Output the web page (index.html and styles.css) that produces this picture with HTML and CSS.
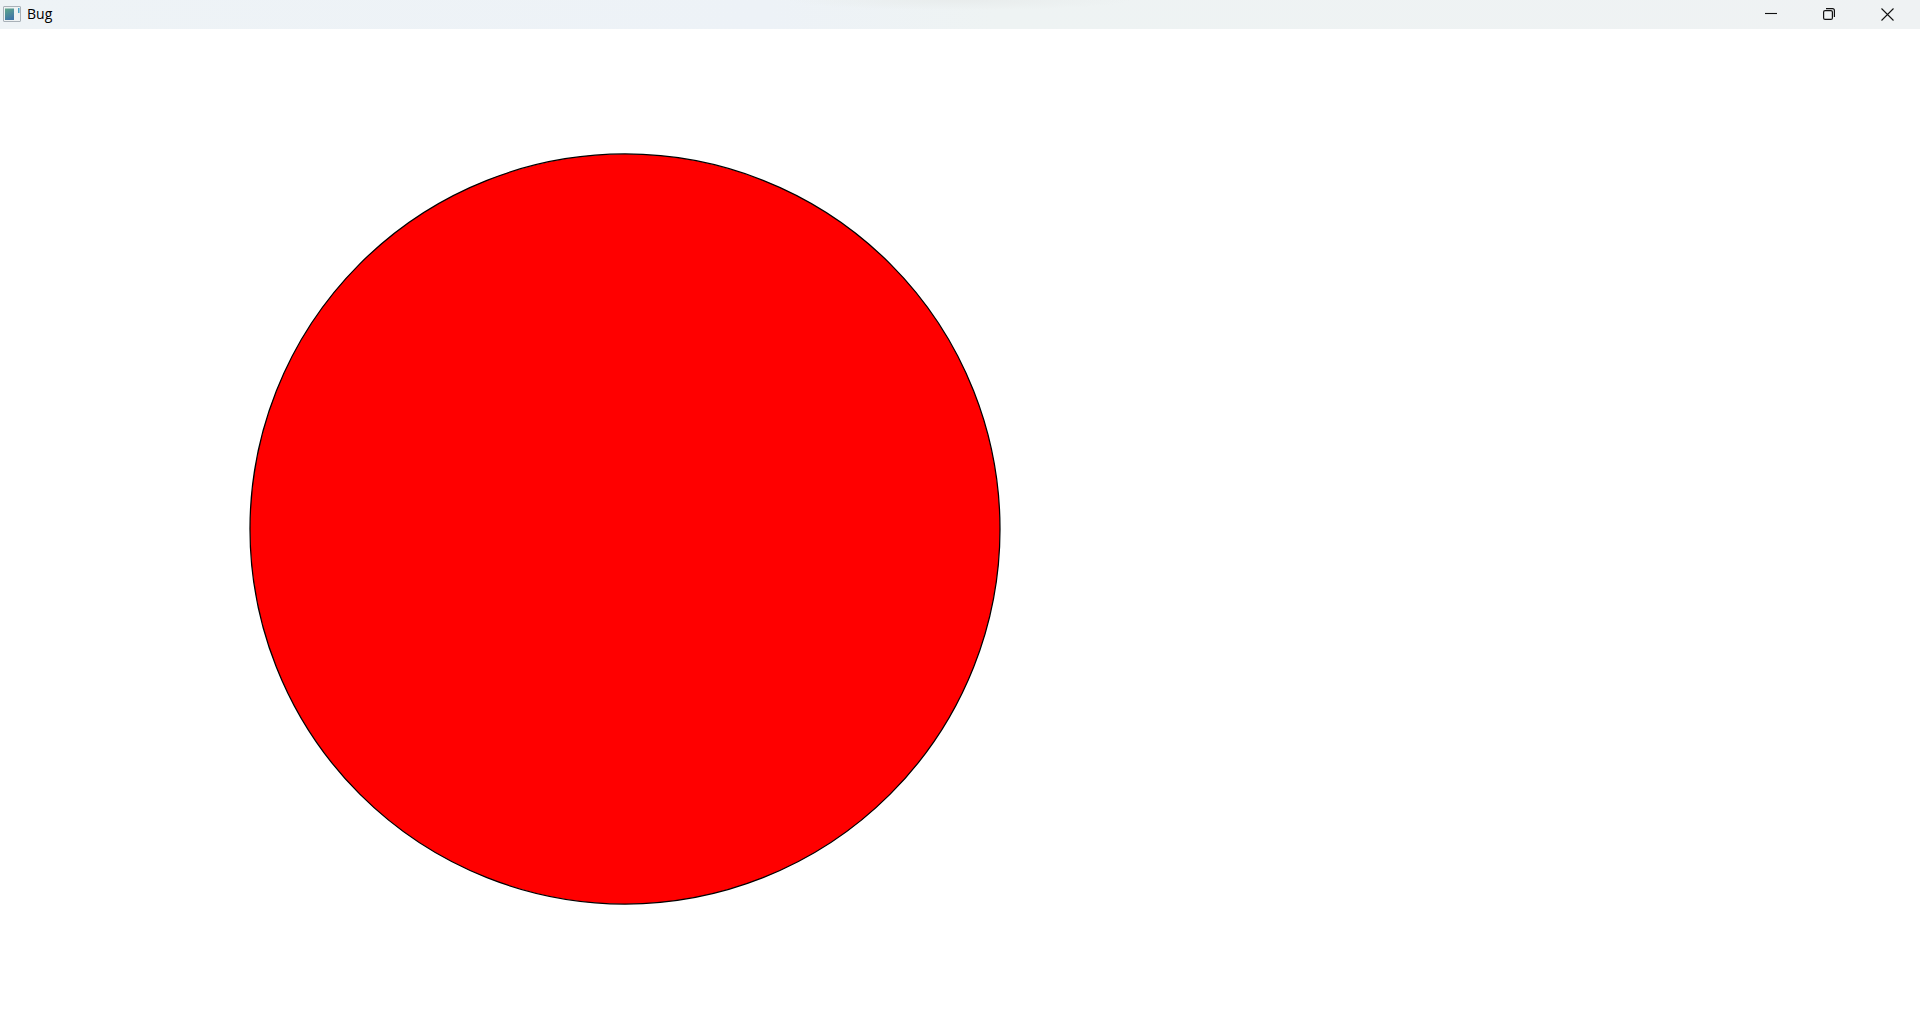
FILE: index.html
```html
<!DOCTYPE html>
<html lang="en">
<head>
<meta charset="utf-8">
<title>Bug</title>
<link rel="stylesheet" href="styles.css">
</head>
<body>
<header class="titlebar">
  <div class="title-group">
    <svg class="app-icon" width="20" height="20" viewBox="0 0 20 20" aria-hidden="true">
      <defs>
        <linearGradient id="pane" x1="0" y1="0" x2="0.4" y2="1">
          <stop offset="0" stop-color="#5fa88a"/>
          <stop offset="1" stop-color="#3f76a6"/>
        </linearGradient>
      </defs>
      <rect x="2.5" y="2.5" width="17" height="15" rx="0.5" fill="#eef2f3" stroke="#a9b1b8"/>
      <rect x="4" y="4.5" width="9" height="11.5" fill="url(#pane)"/>
      <rect x="17" y="4" width="1.5" height="5" fill="#4aa3c7"/>
    </svg>
    <span class="title">Bug</span>
  </div>
  <div class="controls">
    <button class="control" aria-label="Minimize">
      <svg width="12" height="12" viewBox="0 0 12 12"><path d="M0 5.5H12" fill="none" stroke="#111111" stroke-width="1.1"/></svg>
    </button>
    <button class="control" aria-label="Restore">
      <svg width="12" height="12" viewBox="0 0 12 12"><rect x=".6" y="2.6" width="8.8" height="8.8" rx="1.5" fill="none" stroke="#111111" stroke-width="1.2"/><path d="M3 .6H9.5A1.9 1.9 0 0 1 11.4 2.5V9" fill="none" stroke="#111111" stroke-width="1.2"/></svg>
    </button>
    <button class="control" aria-label="Close">
      <svg width="13" height="13" viewBox="0 0 13 13"><path d="M.5.5 12.5 12.5M12.5.5.5 12.5" fill="none" stroke="#111111" stroke-width="1.1"/></svg>
    </button>
  </div>
</header>
<main class="canvas">
  <svg class="shape" width="752" height="752" viewBox="0 0 752 752" aria-hidden="true">
    <circle cx="376" cy="376" r="375" fill="#ff0000" stroke="#000000" stroke-width="1.25"/>
  </svg>
</main>
</body>
</html>
```
FILE: styles.css
```css
html, body {
  margin: 0;
  height: 100%;
  background: #ffffff;
  overflow: hidden;
}
body {
  display: flex;
  flex-direction: column;
  font-family: "Open Sans", "Noto Sans", sans-serif;
}
.titlebar {
  position: relative;
  flex: 0 0 29px;
  height: 29px;
  display: flex;
  align-items: flex-start;
  justify-content: space-between;
  background: linear-gradient(90deg, #eef3f6 0%, #edf2f7 40%, #eef3f3 52%, #eff2f3 100%);
}
.titlebar::before {
  content: "";
  position: absolute;
  top: 0;
  left: 790px;
  width: 340px;
  height: 10px;
  background: radial-gradient(ellipse at 50% 0, #e8ecec 0%, rgba(232, 236, 236, 0) 72%);
}
.title-group {
  position: relative;
  height: 28px;
  display: flex;
  align-items: center;
  gap: 6px;
}
.app-icon {
  display: block;
  flex: none;
  margin-left: 1px;
}
.title {
  font-size: 14px;
  color: #000000;
  line-height: 28px;
}
.controls {
  position: relative;
  display: flex;
  height: 28px;
  padding-right: 3px;
}
.control {
  width: 58.5px;
  height: 100%;
  padding: 0;
  border: 0;
  background: transparent;
  display: flex;
  align-items: center;
  justify-content: center;
}
.canvas {
  flex: 1;
  padding: 124px 0 0 249px;
}
.shape {
  display: block;
}
```
